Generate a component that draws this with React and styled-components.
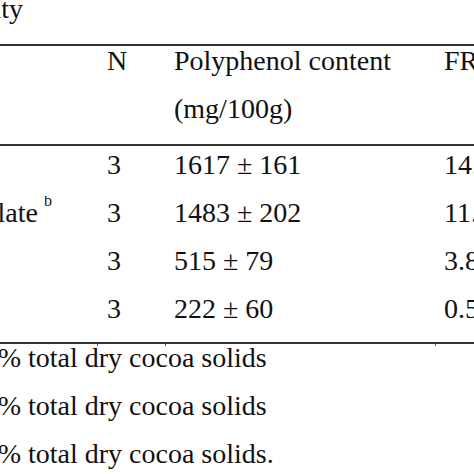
import styled, { createGlobalStyle } from "styled-components";

const GlobalStyle = createGlobalStyle`
  html, body {
    margin: 0;
    padding: 0;
    background: #fff;
    font-family: "Liberation Serif", "Times New Roman", serif;
  }
`;

const Frame = styled.div`
  width: 474px;
  height: 474px;
  overflow: hidden;
  font-family: "Liberation Serif", "Times New Roman", serif;
  font-size: 28px;
  line-height: 34px;
  color: #111;
  white-space: nowrap;
`;

// keeps the right end of a long text at a set place, cutting off the start
const Clip = styled.div`
  width: ${(p) => p.$w}px;
  padding-right: ${(p) => p.$pad || 0}px;
  box-sizing: border-box;
  display: flex;
  justify-content: flex-end;
  overflow: hidden;
  flex-shrink: 0;
`;

const Title = styled.div`
  margin-top: -8px;
  margin-bottom: 18px;
  display: flex;
`;

const Rule = styled.div`
  height: 2px;
  background: #333;
`;

// bottom rule keeps the little stubs of the cell borders under it
const EndRule = styled.div`
  height: 4px;
  margin-bottom: -2px;
  background:
    linear-gradient(#333, #333) 0 0 / 100% 2px no-repeat,
    linear-gradient(#555, #555) 97px 0 / 1px 4px no-repeat,
    linear-gradient(#555, #555) 165px 0 / 1px 4px no-repeat,
    linear-gradient(#555, #555) 435px 0 / 1px 4px no-repeat;
`;

const Grid = styled.div`
  display: grid;
  grid-template-columns: 107px 67px 270px 1fr;
  overflow: hidden;
`;

const Head = styled(Grid)`
  margin-top: -2px;
  padding-bottom: 18px;
`;

const Body = styled.div`
  display: flex;
  flex-direction: column;
  gap: 14px;
  padding: 2px 0 16px;
`;

const Lines = styled.div`
  display: flex;
  flex-direction: column;
  gap: 14px;
`;

const Cell = styled.div`
  overflow: ${(p) => (p.$last ? "visible" : "hidden")};
`;

const Sup = styled.span`
  font-size: 16px;
  vertical-align: 16px;
  line-height: 0;
  margin-left: 6px;
`;

const Notes = styled.div`
  display: flex;
  flex-direction: column;
  gap: 20px;
  line-height: 28px;
`;

const Note = styled.div`
  display: flex;
`;

const NoteText = styled.span`
  margin-left: 7px;
`;

const rows = [
  { name: "", sup: "", n: 3, poly: "1617 ± 161", frap: "14.9 ± 1.6" },
  { name: "Milk chocolate", sup: "b", n: 3, poly: "1483 ± 202", frap: "11.6 ± 1.9" },
  { name: "", sup: "", n: 3, poly: "515 ± 79", frap: "3.8 ± 0.6" },
  { name: "", sup: "", n: 3, poly: "222 ± 60", frap: "0.5 ± 0.1" },
];

const notes = ["a 70%", "b 30%", "c 20%"];

function App() {
  return (
    <>
      <GlobalStyle />
      <Frame>
        <Title>
          <Clip $w={23}>Table 1 Polyphenol content and antioxidant capacity</Clip>
        </Title>
        <Rule />
        <Head>
          <Cell />
          <Cell>N</Cell>
          <Lines>
            <div>Polyphenol content</div>
            <div>(mg/100g)</div>
          </Lines>
          <Cell $last>FRAP (mmol/100g)</Cell>
        </Head>
        <Rule />
        <Body>
          {rows.map((r, i) => (
            <Grid key={i}>
              <Clip $w={107} $pad={55}>
                <span>
                  {r.name}
                  {r.sup && <Sup>{r.sup}</Sup>}
                </span>
              </Clip>
              <Cell>{r.n}</Cell>
              <Cell>{r.poly}</Cell>
              <Cell $last>{r.frap}</Cell>
            </Grid>
          ))}
        </Body>
        <EndRule />
        <Notes>
          {notes.map((t, i) => (
            <Note key={t}>
              <Clip $w={21}>{t}</Clip>
              <NoteText>total dry cocoa solids{i === 2 ? "." : ""}</NoteText>
            </Note>
          ))}
        </Notes>
      </Frame>
    </>
  );
}

export default App;
